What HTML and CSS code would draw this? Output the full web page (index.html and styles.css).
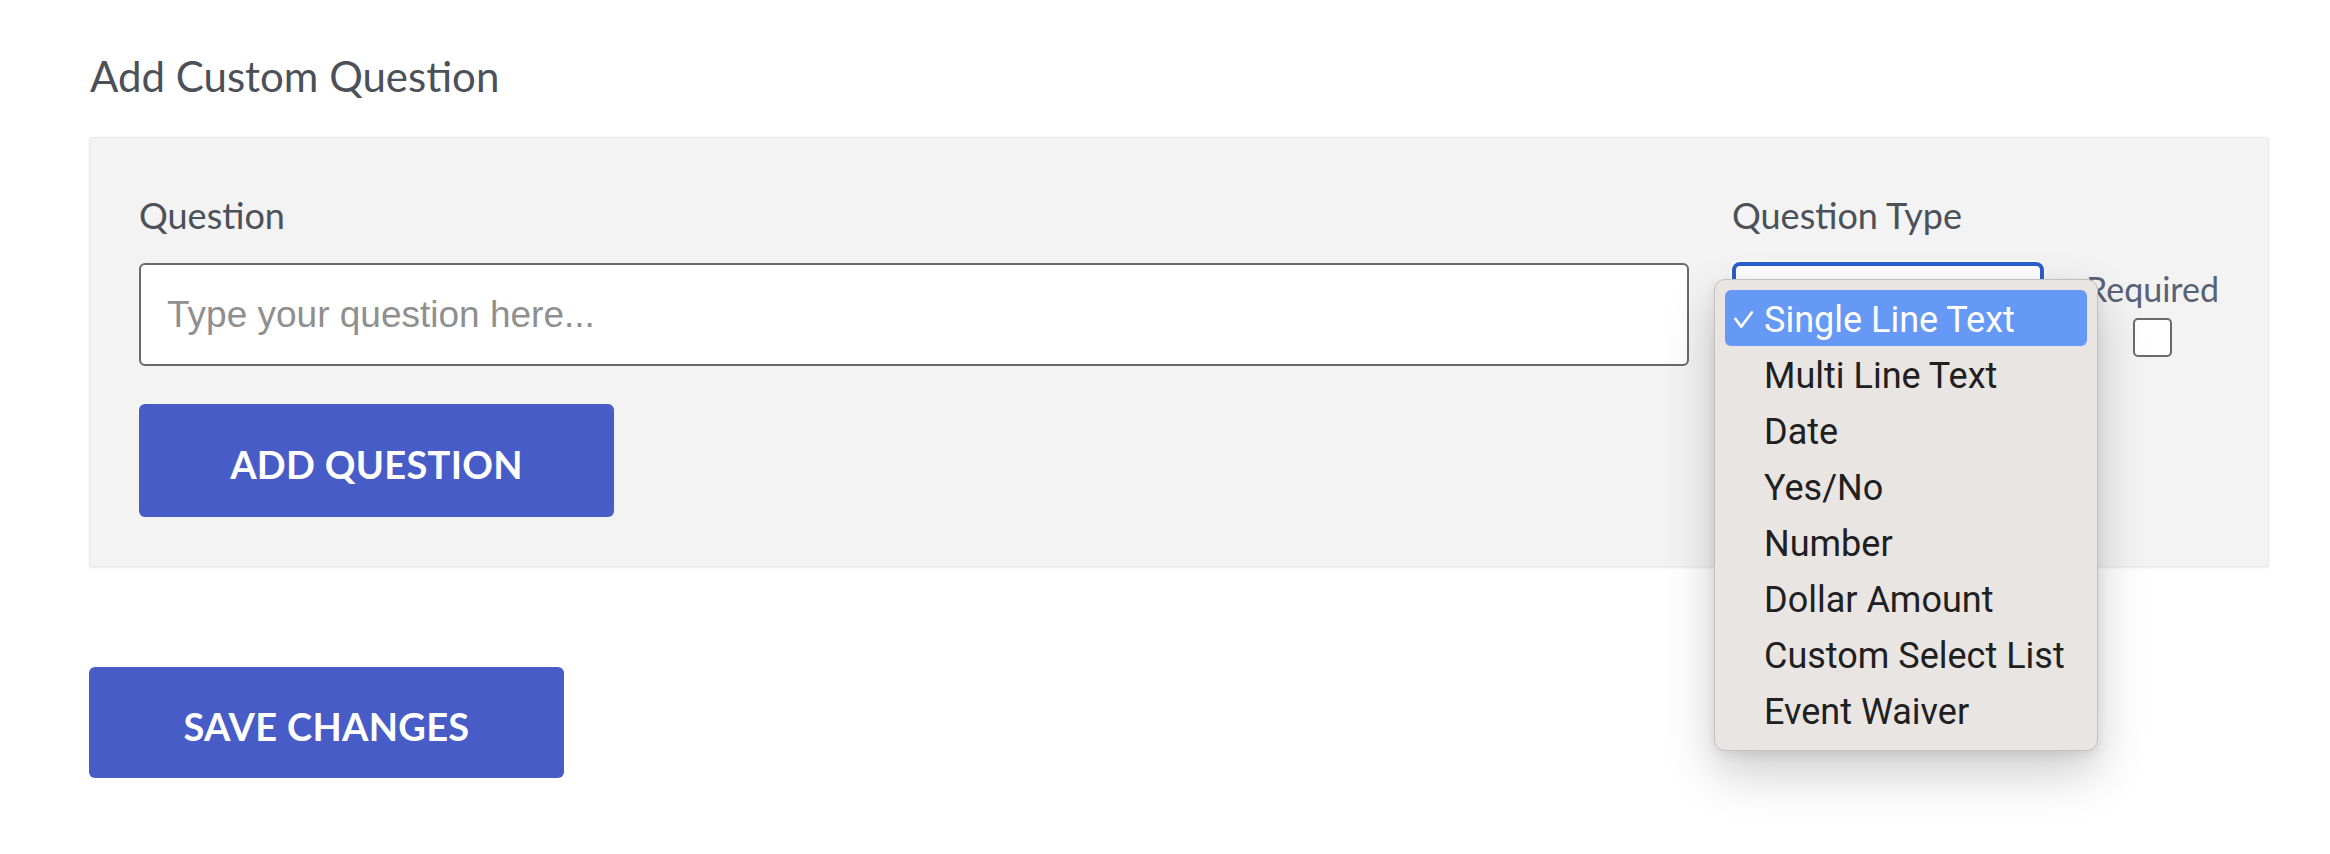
FILE: index.html
```html
<!DOCTYPE html>
<html lang="en">
<head>
<meta charset="utf-8">
<title>Add Custom Question</title>
<link rel="stylesheet" href="styles.css">
</head>
<body>
<main class="page">
  <h2 class="title">Add Custom Question</h2>
  <section class="panel">
    <div class="row">
      <div class="field field-question">
        <label class="label" for="q">Question</label>
        <input id="q" class="text-input" type="text" placeholder="Type your question here...">
      </div>
      <div class="field field-type">
        <span class="label">Question Type</span>
        <div class="select-wrap">
          <div class="select"></div>
          <ul class="menu">
            <li class="menu-item selected">
              <svg class="check" width="19" height="17" viewBox="0 0 19 17"><path d="M1.4 7.8 L7.2 15.8 L17.8 1.4" fill="none" stroke="#ffffff" stroke-width="2.6" stroke-linecap="round" stroke-linejoin="round"/></svg>
              Single Line Text
            </li>
            <li class="menu-item">Multi Line Text</li>
            <li class="menu-item">Date</li>
            <li class="menu-item">Yes/No</li>
            <li class="menu-item">Number</li>
            <li class="menu-item">Dollar Amount</li>
            <li class="menu-item">Custom Select List</li>
            <li class="menu-item">Event Waiver</li>
          </ul>
        </div>
      </div>
      <div class="field field-required">
        <span class="req-label">Required</span>
        <span class="checkbox"></span>
      </div>
    </div>
    <button class="btn btn-add" type="button">ADD QUESTION</button>
  </section>
  <button class="btn btn-save" type="button">SAVE CHANGES</button>
</main>
</body>
</html>
```

FILE: styles.css
```css
* {
  box-sizing: border-box;
}

html {
  margin: 0;
  padding: 0;
  background: #ffffff;
}

body {
  margin: 0;
  padding: 0;
  min-height: 854px;
  font-family: Lato, "Open Sans", sans-serif;
  color: #4b5059;
}

.page {
  padding: 51px 0 0 89px;
  width: 2269px;
}

.title {
  margin: 0 0 0 1px;
  font-size: 42px;
  line-height: 50px;
  font-weight: 400;
  color: #4b5059;
}

.panel {
  margin-top: 36px;
  background: #f3f3f3;
  border: 1px solid #e7e7e7;
  border-radius: 3px;
  box-shadow: 0 1px 2px rgba(0, 0, 0, 0.08);
  padding: 55px 50px 49px 49px;
}

.row {
  display: flex;
  gap: 43px;
}

.field {
  display: flex;
  flex-direction: column;
}

.field-question {
  flex: 1;
}

.field-type {
  width: 312px;
}

.field-required {
  width: 131px;
  align-items: center;
  padding-top: 76px;
}

.label {
  display: block;
  font-size: 36px;
  line-height: 44px;
  color: #4b5059;
}

.text-input {
  margin-top: 26px;
  height: 103px;
  width: 100%;
  border: 2px solid #696969;
  border-radius: 6px;
  background: #ffffff;
  padding: 0 0 0 26px;
  font-family: "Liberation Sans", Arial, sans-serif;
  font-size: 37px;
  color: #333333;
  outline: none;
}

.text-input::placeholder {
  color: #8f8f8f;
}

.select-wrap {
  position: relative;
  margin-top: 25px;
}

.select {
  height: 103px;
  border: 4px solid #2b5fcf;
  border-radius: 8px;
  background: #ffffff;
  box-shadow: 0 0 0 2px #fafafa;
}

.menu {
  position: absolute;
  left: -18px;
  top: 17px;
  z-index: 5;
  width: 384px;
  margin: 0;
  padding: 10px 10px 12px 10px;
  list-style: none;
  background: #e9e5e3;
  border: 1px solid #c4c0be;
  border-radius: 11px;
  box-shadow: 0 22px 50px rgba(0, 0, 0, 0.2), 0 4px 12px rgba(0, 0, 0, 0.08);
  font-family: Roboto, "Liberation Sans", sans-serif;
}

.menu-item {
  position: relative;
  height: 56px;
  line-height: 52px;
  padding-top: 4px;
  padding-left: 39px;
  font-size: 36px;
  color: #202020;
  border-radius: 6px;
  white-space: nowrap;
}

.menu-item.selected {
  background: #6599f5;
  color: #ffffff;
}

.check {
  position: absolute;
  left: 9px;
  top: 21px;
}

.req-label {
  font-size: 34px;
  line-height: 40px;
  color: #596174;
}

.checkbox {
  display: block;
  margin-top: 9px;
  width: 39px;
  height: 39px;
  border: 2px solid #6a6a6a;
  border-radius: 5px;
  background: #ffffff;
}

.btn {
  display: flex;
  align-items: center;
  justify-content: center;
  width: 475px;
  border: none;
  border-radius: 6px;
  background: #475cc7;
  color: #ffffff;
  font-family: Lato, "Open Sans", sans-serif;
  font-weight: 700;
  font-size: 38px;
  letter-spacing: 0.3px;
  padding: 7px 0 0 0;
  cursor: pointer;
}

.btn-add {
  margin-top: 38px;
  height: 113px;
}

.btn-save {
  margin-top: 100px;
  height: 111px;
}
```
